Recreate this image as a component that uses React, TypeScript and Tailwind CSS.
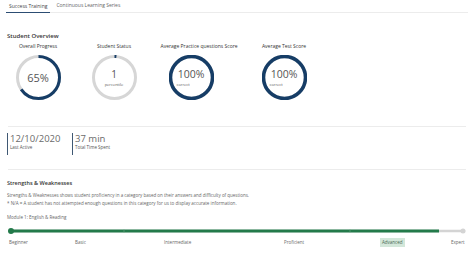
const NAVY = '#163d66';

function Ring({ pct, children, thick = 3 }: { pct: number; children: React.ReactNode; thick?: number }) {
  const r = 21;
  const c = 2 * Math.PI * r;
  return (
    <div className="relative w-[45px] h-[45px]">
      <svg width="45" height="45" viewBox="0 0 45 45" className="absolute inset-0">
        <circle cx="22.5" cy="22.5" r={r} fill="none" stroke="#d6d6d6" strokeWidth={thick} />
        <circle
          cx="22.5"
          cy="22.5"
          r={r}
          fill="none"
          stroke={NAVY}
          strokeWidth={thick}
          strokeDasharray={`${(c * pct) / 100} ${c}`}
          transform="rotate(-90 22.5 22.5)"
        />
      </svg>
      <div className="absolute inset-0 flex flex-col items-center justify-center">{children}</div>
    </div>
  );
}

const LEVELS = [
  { label: 'Beginner', x: 9 },
  { label: 'Basic', x: 75 },
  { label: 'Intermediate', x: 164 },
  { label: 'Proficient', x: 284 },
  { label: 'Advanced', x: 381, active: true },
  { label: 'Expert', x: 451 },
];

export default function App() {
  return (
    <div
      className="w-[474px] h-[256px] bg-white text-[#333] overflow-hidden"
      style={{ fontFamily: '"Open Sans", "Liberation Sans", sans-serif' }}
    >
      {/* Tabs */}
      <div className="mx-[6px] h-[13px] flex items-end border-b border-[#ececec] text-[5px] text-[#444]">
        <div className="h-full px-[3px] flex items-center border-b-[1.5px] border-[#2c4d73] -mb-px">Success Training</div>
        <div className="h-full ml-[3px] px-[3px] flex items-center text-[#666]">Continuous Learning Series</div>
      </div>

      {/* Student overview */}
      <div className="px-[7px] mt-[19px] text-[6px] font-semibold leading-[8px]">Student Overview</div>
      <div className="flex gap-[16px] pl-[8px] mt-[2px]">
        <div className="w-[60px] flex flex-col items-center">
          <div className="text-[5px] leading-[8px] h-[8px] whitespace-nowrap">Overall Progress</div>
          <div className="mt-[5px]">
            <Ring pct={65}>
              <span className="text-[11px] leading-none text-[#555]">65%</span>
            </Ring>
          </div>
        </div>
        <div className="w-[60px] flex flex-col items-center">
          <div className="text-[5px] leading-[8px] h-[8px] whitespace-nowrap">Student Status</div>
          <div className="mt-[5px]">
            <Ring pct={1.5}>
              <span className="text-[10px] leading-[12px] text-[#555]">1</span>
              <span className="text-[4px] leading-[5px] text-[#555] mt-[2px]">percentile</span>
            </Ring>
          </div>
        </div>
        <div className="w-[78px] flex flex-col items-center">
          <div className="text-[5px] leading-[8px] h-[8px] whitespace-nowrap">Average Practice questions Score</div>
          <div className="mt-[5px] mr-[16px]">
            <Ring pct={100} thick={3.5}>
              <span className="text-[10.5px] leading-[12px] text-[#555]">100%</span>
              <span className="text-[4px] leading-[5px] text-[#555] self-start ml-[8px] mt-[2px]">correct</span>
            </Ring>
          </div>
        </div>
        <div className="w-[60px] flex flex-col items-center">
          <div className="text-[5px] leading-[8px] h-[8px] whitespace-nowrap">Average Test Score</div>
          <div className="mt-[5px]">
            <Ring pct={100} thick={3.5}>
              <span className="text-[10.5px] leading-[12px] text-[#555]">100%</span>
              <span className="text-[4px] leading-[5px] text-[#555] self-start ml-[8px] mt-[2px]">correct</span>
            </Ring>
          </div>
        </div>
      </div>

      <div className="mx-[8px] mt-[26px] border-t border-[#ececec]" />

      {/* Stats */}
      <div className="flex gap-[9px] px-[7px] mt-[6px]">
        <div className="border-l border-[#3f5873] pl-[2px] h-[22px] w-[56px]">
          <div className="text-[9.5px] leading-[11px] text-[#6b6b6b]">12/10/2020</div>
          <div className="text-[4.5px] leading-[7px] text-[#555]">Last Active</div>
        </div>
        <div className="border-l border-[#3f5873] pl-[2px] h-[22px]">
          <div className="text-[9.5px] leading-[11px] text-[#6b6b6b]">37 min</div>
          <div className="text-[4.5px] leading-[7px] text-[#555]">Total Time Spent</div>
        </div>
      </div>

      <div className="mx-[8px] mt-[14px] border-t border-[#ececec]" />

      {/* Strengths */}
      <div className="px-[7px] mt-[9px] text-[5.5px] font-semibold leading-[8px]">Strengths &amp; Weaknesses</div>
      <div className="px-[7px] mt-[4px] text-[4.5px] leading-[8px] text-[#666]">
        <div>Strengths &amp; Weaknesses shows student proficiency in a category based on their answers and difficulty of questions.</div>
        <div>* N/A = A student has not attempted enough questions in this category for us to display accurate information.</div>
      </div>
      <div className="px-[7px] mt-[6px] text-[4.5px] leading-[8px] text-[#666]">Module 1: English &amp; Reading</div>

      {/* Level bar */}
      <div className="relative h-[8px] mx-[8px] mt-[6px]">
        <svg width="458" height="8" viewBox="0 0 458 8" className="absolute inset-0">
          <line x1="2" y1="4" x2="456" y2="4" stroke="#d4d4d4" strokeWidth="2.5" strokeLinecap="round" />
          <line x1="2" y1="4" x2="431" y2="4" stroke="#237a4a" strokeWidth="3" />
          <circle cx="3" cy="4" r="3" fill="#237a4a" />
          <circle cx="455" cy="4" r="2.5" fill="#d4d4d4" />
          <line x1="116" y1="2.5" x2="116" y2="5.5" stroke="#6aa582" strokeWidth="0.6" />
          <line x1="342" y1="2.5" x2="342" y2="5.5" stroke="#6aa582" strokeWidth="0.6" />
        </svg>
      </div>
      <div className="relative h-[10px] mt-[3px] text-[4.5px] text-[#666]">
        {LEVELS.map(l => (
          <span
            key={l.label}
            className={
              l.active
                ? 'absolute top-0 h-[9px] px-[2px] leading-[9px] bg-[#d3e7da] text-[#4a6a55]'
                : 'absolute top-0 leading-[9px]'
            }
            style={{ left: l.x - (l.active ? 1 : 0) }}
          >
            {l.label}
          </span>
        ))}
      </div>
    </div>
  );
}
